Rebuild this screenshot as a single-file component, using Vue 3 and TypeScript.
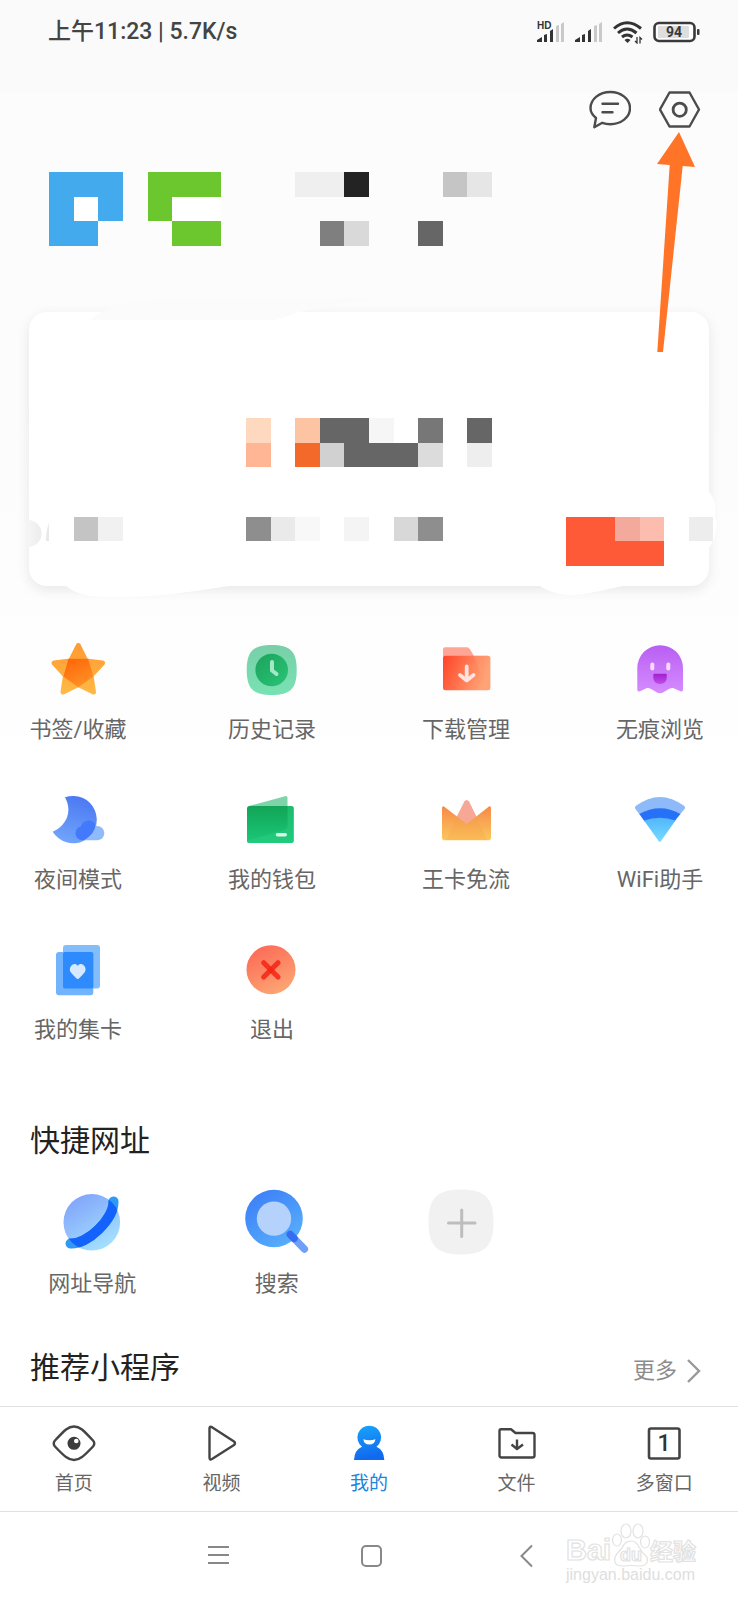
<script setup lang="ts">
interface Entry {
  id: string
  label: string
}

interface Tab extends Entry {
  active?: boolean
}

// x, y, width, height and colour, measured in mosaic cells
type Tile = [number, number, number, number, string]

const shortcuts: Entry[] = [
  { id: 'star', label: '书签/收藏' },
  { id: 'history', label: '历史记录' },
  { id: 'download', label: '下载管理' },
  { id: 'ghost', label: '无痕浏览' },
  { id: 'night', label: '夜间模式' },
  { id: 'wallet', label: '我的钱包' },
  { id: 'crown', label: '王卡免流' },
  { id: 'wifi', label: 'WiFi助手' },
  { id: 'cards', label: '我的集卡' },
  { id: 'exit', label: '退出' },
]

const tabs: Tab[] = [
  { id: 'home', label: '首页' },
  { id: 'video', label: '视频' },
  { id: 'mine', label: '我的', active: true },
  { id: 'files', label: '文件' },
  { id: 'windows', label: '多窗口' },
]

const profileTiles: Tile[] = [
  [2, 0, 3, 1, '#42aaed'],
  [2, 1, 1, 2, '#42aaed'],
  [3, 1, 1, 1, '#ffffff'],
  [4, 1, 1, 1, '#42aaed'],
  [3, 2, 1, 1, '#42aaed'],
  [6, 0, 3, 1, '#6cc72f'],
  [6, 1, 1, 1, '#6cc72f'],
  [7, 1, 2, 1, '#ffffff'],
  [7, 2, 2, 1, '#6cc72f'],
  [12, 0, 2, 1, '#efefef'],
  [14, 0, 1, 1, '#232323'],
  [13, 2, 1, 1, '#7f7f7f'],
  [14, 2, 1, 1, '#d9d9d9'],
  [18, 0, 1, 1, '#c5c5c5'],
  [19, 0, 1, 1, '#e6e6e6'],
  [17, 2, 1, 1, '#666666'],
]

const promoTiles: Tile[] = [
  [10, 0, 1, 1, '#ffd8c0'],
  [12, 0, 1, 1, '#fdc4a3'],
  [13, 0, 2, 1, '#666666'],
  [15, 0, 1, 1, '#f6f6f6'],
  [17, 0, 1, 1, '#777777'],
  [19, 0, 1, 1, '#666666'],
  [10, 1, 1, 1, '#ffb694'],
  [12, 1, 1, 1, '#f2692a'],
  [13, 1, 1, 1, '#d1d1d1'],
  [14, 1, 3, 1, '#666666'],
  [17, 1, 1, 1, '#dcdcdc'],
  [19, 1, 1, 1, '#eeeeee'],
  [3, 4, 1, 1, '#c4c4c4'],
  [4, 4, 1, 1, '#f1f1f1'],
  [10, 4, 1, 1, '#8e8e8e'],
  [11, 4, 1, 1, '#eaeaea'],
  [12, 4, 1, 1, '#f8f8f8'],
  [14, 4, 1, 1, '#f4f4f4'],
  [16, 4, 1, 1, '#d8d8d8'],
  [17, 4, 1, 1, '#8e8e8e'],
  [23, 4, 2, 1, '#ff5a38'],
  [25, 4, 1, 1, '#f3a99b'],
  [26, 4, 1, 1, '#fdbdae'],
  [23, 5, 4, 1, '#ff5a38'],
  [28, 4, 1, 1, '#ededed'],
]
</script>

<template>
  <div class="screen">
    <div class="status">
      <span class="clock">上午11:23 | 5.7K/s</span>
      <div class="indicators">
        <svg width="29" height="24" viewBox="-1 0 29 24">
          <text x="0" y="9" class="hd">HD</text>
          <path d="M0 22v-2l5-3v5z" fill="#333" />
          <path d="M7 22v-7l3-1v8zM13 22v-11l3-2v13z" fill="#333" />
          <path d="M19 22V6l3-1v17zM24 22V4l3-2v20z" fill="#c9c9c9" />
        </svg>
        <svg width="28" height="24" viewBox="0 0 28 24">
          <path d="M0 22v-2l5-3v5zM7 22v-7l3-1v8zM13 22v-11l3-2v13z" fill="#333" />
          <path d="M19 22V6l3-1v17zM24 22V4l3-2v20z" fill="#c9c9c9" />
        </svg>
        <svg width="30" height="24" viewBox="0 0 30 24" fill="none" stroke="#333" stroke-width="3">
          <path d="M1 8.500Q14 -3 28 8.500M5 13Q14 5 23.500 13M9 17Q14 13 19.500 17" />
          <path d="M14.500 23l-3-3q3-2.500 6 0z" fill="#333" stroke="none" />
          <path d="M24 17v6l-2-2M27 23.500v-6l2 2" stroke-width="1.300" />
        </svg>
        <svg width="47" height="24" viewBox="0 0 47 24">
          <rect x="1.500" y="3" width="40" height="18" rx="4.500" fill="#fff" stroke="#3a3a3a" stroke-width="2.600" />
          <rect x="5" y="6" width="31" height="12" rx="1" fill="#dedede" />
          <rect x="44" y="9" width="2.500" height="6" rx="1" fill="#3a3a3a" />
          <text x="21" y="17" text-anchor="middle" class="charge">94</text>
        </svg>
      </div>
    </div>

    <header class="actions">
      <button type="button" aria-label="消息">
        <svg width="42" height="40" viewBox="0 0 42 40" fill="none" stroke="#4c4c4c" stroke-width="2.400" stroke-linecap="round">
          <path d="M7 29C3.500 26 1.500 23 1.500 19.200C1.500 10 10.500 3 21.300 3S41 10 41 19.200S32 35.200 21.300 35.200Q17 35.200 13.300 33.800L5.300 38.200Z" stroke-linejoin="round" />
          <path d="M13.500 14.800h15.500M13.500 23.300h10" />
        </svg>
      </button>
      <button type="button" aria-label="设置">
        <svg width="42" height="40" viewBox="0 0 42 40" fill="none" stroke="#4c4c4c" stroke-width="2.400" stroke-linejoin="round">
          <path d="M10.500 3.500h20l9.500 17l-9.500 17H10.500L1 20.500z" />
          <circle cx="20.700" cy="20.700" r="6.600" stroke-width="2.800" />
        </svg>
      </button>
      <svg class="pointer" width="42" height="222" viewBox="0 0 42 222">
        <path d="M24 1L2 33l12.700 1L2.300 221H8L27.700 35L40 36z" fill="#ff7427" />
      </svg>
    </header>

    <svg class="profile" viewBox="0 0 30 3" shape-rendering="crispEdges">
      <rect v-for="([x, y, w, h, color], i) in profileTiles" :key="i" :x="x" :y="y" :width="w" :height="h" :fill="color" />
    </svg>

    <section class="promo">
      <div class="card"></div>
      <svg class="promo-art" viewBox="0 0 738 320">
        <defs>
          <linearGradient id="notch" x1="0" x2="1">
            <stop offset="0" stop-color="#f5f5f5" />
            <stop offset="1" stop-color="#ececec" />
          </linearGradient>
        </defs>
        <path d="M91 30C105 16 130 8 190 8H390C350 12 315 17 292 24Q282 30 270 30Z" fill="#fbfbfb" />
        <path d="M64 294C78 309 104 308 150 306C192 303 220 296 250 294V285H64Z" fill="#fff" />
        <path d="M537 294C552 305 568 307 590 303L632 294V284H537Z" fill="#fff" />
        <path d="M705 198Q718 208 715 226Q721 246 705 262Z" fill="#fff" />
        <path d="M28 230A13 13 0 0 1 28 257Z" fill="url(#notch)" />
        <path d="M49 233V251H46Q46 240 49 233Z" fill="#e8e8e8" />
        <g transform="translate(0 128.200) scale(24.600)" shape-rendering="crispEdges">
          <rect v-for="([x, y, w, h, color], i) in promoTiles" :key="i" :x="x" :y="y" :width="w" :height="h" :fill="color" />
        </g>
      </svg>
    </section>

    <section class="shortcuts">
      <button v-for="item in shortcuts" :key="item.id" type="button" class="entry">
        <svg v-if="item.id === 'star'" width="60" height="60" viewBox="0 0 60 60">
          <defs>
            <linearGradient id="starA" x1="0" y1="0" x2="0" y2="1"><stop offset="0" stop-color="#ff9b33" /><stop offset="1" stop-color="#ffb845" /></linearGradient>
            <linearGradient id="starB" x1="0" y1="0" x2="0.500" y2="1"><stop offset="0" stop-color="#ff6208" /><stop offset="1" stop-color="#ff9024" /></linearGradient>
          </defs>
          <path d="M30.300 5.500L38 21L54.500 23L43 35.500L45.500 52L30.300 44.500L15 52L17.500 35.500L6 23L22.500 21Z" fill="url(#starA)" stroke="url(#starA)" stroke-width="5" stroke-linejoin="round" />
          <path d="M20.500 18.700H40.200L45.300 36.500L30.300 47.300L15.300 36.500Z" fill="url(#starB)" />
        </svg>
        <svg v-else-if="item.id === 'history'" width="60" height="60" viewBox="0 0 60 60">
          <defs>
            <linearGradient id="histA" x1="0" y1="0" x2="0" y2="1"><stop offset="0" stop-color="#79cfa7" /><stop offset="1" stop-color="#78e2b3" /></linearGradient>
            <linearGradient id="histB" x1="0" y1="0" x2="1" y2="1"><stop offset="0" stop-color="#1aa35b" /><stop offset="1" stop-color="#2bc476" /></linearGradient>
          </defs>
          <path d="M29.700 5C48 5 54.700 11 54.700 30S48 55 29.700 55S4.700 49 4.700 30S11.500 5 29.700 5Z" fill="url(#histA)" />
          <circle cx="29.700" cy="30" r="16.300" fill="url(#histB)" />
          <path d="M30 22v8.500l4.500 3.500" fill="none" stroke="#a5e8c6" stroke-width="4" stroke-linecap="round" stroke-linejoin="round" />
        </svg>
        <svg v-else-if="item.id === 'download'" width="60" height="60" viewBox="0 0 60 60">
          <defs>
            <linearGradient id="foldA" x1="0" x2="1" y2="0.300"><stop offset="0" stop-color="#ff4427" /><stop offset="1" stop-color="#ffa274" /></linearGradient>
          </defs>
          <path d="M9 7.300H31Q33 7.300 34.500 10L48 34V45H7V9.300Q7 7.300 9 7.300Z" fill="#ffa596" />
          <rect x="7" y="15.700" width="47.300" height="34.500" rx="2.500" fill="url(#foldA)" />
          <path d="M37.500 15.700H52Q54.300 15.700 54.300 18V48Q54.300 50.200 52 50.200Z" fill="#ffa57c" opacity="0.300" />
          <path d="M30.700 26.500V40M24 35l6.700 5.500L37.500 35" fill="none" stroke="#ffe3dc" stroke-width="3.800" stroke-linecap="round" stroke-linejoin="round" />
        </svg>
        <svg v-else-if="item.id === 'ghost'" width="60" height="60" viewBox="0 0 60 60">
          <defs>
            <linearGradient id="ghostA" x1="0" y1="0" x2="0" y2="1"><stop offset="0" stop-color="#b85ff2" /><stop offset="1" stop-color="#d68cff" /></linearGradient>
            <linearGradient id="ghostB" x1="0" y1="0" x2="0" y2="1"><stop offset="0" stop-color="#a31fd0" /><stop offset="1" stop-color="#c04de8" /></linearGradient>
          </defs>
          <path d="M7.300 28A22.800 22.800 0 0 1 53 28V49.500Q53 52 50.500 51.200L43 48Q40.500 47.500 38 49.500L33 52.500Q30 54 27 52.500L22 49.500Q19.500 47.500 17 48L10 51.200Q7.300 52 7.300 49.500Z" fill="url(#ghostA)" />
          <path d="M22.300 24.500v4M38.300 24.500v4" stroke="#ffdbff" stroke-width="4" stroke-linecap="round" />
          <path d="M23.300 35Q23.300 33.700 24.600 33.700H35.500Q36.800 33.700 36.800 35V37Q36.800 44 30 44T23.300 37Z" fill="url(#ghostB)" />
        </svg>
        <svg v-else-if="item.id === 'night'" width="60" height="60" viewBox="0 0 60 60">
          <defs>
            <linearGradient id="moonA" x1="0.600" y1="0" x2="0.300" y2="1"><stop offset="0" stop-color="#4b78f2" /><stop offset="1" stop-color="#71a6fb" /></linearGradient>
            <clipPath id="moonClip"><circle cx="24.600" cy="29.600" r="23.700" /></clipPath>
          </defs>
          <path d="M17 7.300A23.700 23.700 0 1 1 4.700 41.700C18 36 25 22 17 7.300Z" fill="url(#moonA)" />
          <g fill="#90bbfb"><circle cx="40.700" cy="38" r="8" /><rect x="27.300" y="36" width="29" height="14.300" rx="7.150" /></g>
          <g clip-path="url(#moonClip)" fill="#4379fb"><circle cx="40.700" cy="38" r="8" /><rect x="27.300" y="36" width="29" height="14.300" rx="7.150" /></g>
        </svg>
        <svg v-else-if="item.id === 'wallet'" width="60" height="60" viewBox="0 0 60 60">
          <defs>
            <linearGradient id="walA" x1="0" y1="0" x2="0" y2="1"><stop offset="0" stop-color="#12a456" /><stop offset="1" stop-color="#1bc878" /></linearGradient>
          </defs>
          <path d="M7 16L43 6.200Q45.500 5.500 45.500 8V18H7Z" fill="#7dd4a8" />
          <rect x="5" y="16" width="46.700" height="37" rx="2.500" fill="url(#walA)" />
          <path d="M45.500 16H49.200Q51.700 16 51.700 18.500V50.500Q51.700 53 49.200 53H7Q5 53 5 50.500L42 40Q45.500 39 45.500 36Z" fill="#28cd80" opacity="0.550" />
          <path d="M35.500 44.700h7.700" stroke="#d7f7e7" stroke-width="3.600" stroke-linecap="round" />
        </svg>
        <svg v-else-if="item.id === 'crown'" width="60" height="60" viewBox="0 0 60 60">
          <defs>
            <linearGradient id="crownA" x1="0" y1="0" x2="0" y2="1"><stop offset="0" stop-color="#f68a48" /><stop offset="1" stop-color="#fcc75f" /></linearGradient>
          </defs>
          <path d="M28.300 11.500Q30.700 8.500 33.100 11.500L50 46H11Z" fill="#f6a796" />
          <path d="M6 18.500Q6 15 9 17.200L30.700 34L52 17.200Q55 15 55 18.500V47.500Q55 50.200 52.500 50.200H8.500Q6 50.200 6 47.500Z" fill="url(#crownA)" />
          <path d="M21.500 27L30.700 34L40 27L51 50H10Z" fill="#f0a040" opacity="0.280" />
        </svg>
        <svg v-else-if="item.id === 'wifi'" width="60" height="60" viewBox="0 0 60 60">
          <defs>
            <linearGradient id="wifiA" x1="0" y1="0" x2="0" y2="1"><stop offset="0" stop-color="#52b6fc" /><stop offset="1" stop-color="#76dcff" /></linearGradient>
          </defs>
          <path d="M5.500 19Q4 17.300 6 15.800Q30 -2 54 15.800Q56 17.300 54.500 19L50 24.500H9.500Z" fill="#8ebafa" />
          <path d="M9.300 24Q30 12.500 50.400 24L44 32H15Z" fill="#2771f8" />
          <path d="M14 30.500Q30 25 45.500 30.500L31 51Q29.800 52.700 28.600 51Z" fill="url(#wifiA)" />
        </svg>
        <svg v-else-if="item.id === 'cards'" width="60" height="60" viewBox="0 0 60 60">
          <rect x="15" y="5" width="37" height="43.500" rx="3" fill="#83bdfc" />
          <rect x="8" y="12" width="37.300" height="43.300" rx="3" fill="#71b3fc" />
          <rect x="15" y="12" width="30.300" height="36.500" rx="2" fill="#2e8bfe" />
          <path d="M29.700 39Q28.500 39 22.700 32.200C19.500 27.500 26 21 29.700 25.800C33.500 21 40 27.500 36.700 32.200Q31 39 29.700 39Z" fill="#d6e9ff" />
        </svg>
        <svg v-else width="60" height="60" viewBox="0 0 60 60">
          <defs>
            <linearGradient id="exitA" x1="0.200" y1="0" x2="0.700" y2="1"><stop offset="0" stop-color="#fc6856" /><stop offset="1" stop-color="#fca774" /></linearGradient>
          </defs>
          <circle cx="29" cy="29.700" r="24.500" fill="url(#exitA)" />
          <path d="M21.700 22.700L36 37" stroke="#f42415" stroke-width="5" stroke-linecap="round" opacity="0.850" />
          <path d="M36 22.700L21.700 37" stroke="#f42415" stroke-width="5" stroke-linecap="round" opacity="0.850" />
        </svg>
        <span>{{ item.label }}</span>
      </button>
    </section>

    <h2 class="title sites-title">快捷网址</h2>
    <section class="sites">
      <a href="#nav" class="site">
        <svg width="66" height="66" viewBox="0 0 66 66">
          <defs>
            <linearGradient id="globeA" x1="0.200" y1="0.100" x2="0.750" y2="1"><stop offset="0" stop-color="#83a7fb" /><stop offset="1" stop-color="#a5e3ff" /></linearGradient>
            <clipPath id="globeClip"><circle cx="32.800" cy="33.300" r="28.300" /></clipPath>
          </defs>
          <circle cx="32.800" cy="33.300" r="28.300" fill="url(#globeA)" />
          <path d="M11.500 54.500C28 56 55 30 54.500 12.500" fill="none" stroke="#2e9af6" stroke-width="10" stroke-linecap="round" />
          <path d="M11.500 54.500C28 56 55 30 54.500 12.500" fill="none" stroke="#1262fb" stroke-width="10" stroke-linecap="round" clip-path="url(#globeClip)" />
        </svg>
        <span>网址导航</span>
      </a>
      <a href="#search" class="site">
        <svg width="66" height="66" viewBox="0 0 66 66">
          <defs>
            <linearGradient id="findA" x1="0.100" y1="0" x2="0.800" y2="1"><stop offset="0" stop-color="#3b7cf8" /><stop offset="1" stop-color="#58b1fb" /></linearGradient>
          </defs>
          <circle cx="30" cy="29.500" r="28.800" fill="url(#findA)" />
          <circle cx="30" cy="29.600" r="17.200" fill="#b5d2fc" />
          <path d="M46.300 45.500L60.300 60" stroke="#6f9ffa" stroke-width="7.500" stroke-linecap="round" />
          <path d="M46.300 45.500L50 49.300" stroke="#346cf2" stroke-width="7.500" stroke-linecap="round" />
        </svg>
        <span>搜索</span>
      </a>
      <button type="button" class="site" aria-label="添加网址">
        <svg width="66" height="66" viewBox="0 0 66 66">
          <path d="M33 0.500C57 0.500 65.500 9 65.500 33S57 65.500 33 65.500S0.500 57 0.500 33S9 0.500 33 0.500Z" fill="#f1f1f1" />
          <path d="M20.500 34h26.500M33.700 21v26.500" stroke="#bdbdbd" stroke-width="3" stroke-linecap="round" />
        </svg>
      </button>
    </section>

    <div class="mini">
      <h2 class="title">推荐小程序</h2>
      <a href="#more" class="more">
        更多
        <svg width="14" height="24" viewBox="0 0 14 24" fill="none" stroke="#999" stroke-width="2.400">
          <path d="M1 1l11 11L1 23" />
        </svg>
      </a>
    </div>

    <nav class="tabs">
      <a v-for="tab in tabs" :key="tab.id" :href="'#' + tab.id" class="tab" :class="{ active: tab.active }">
        <svg v-if="tab.id === 'home'" width="44" height="40" viewBox="0 0 44 40">
          <path d="M3 17.500Q10.500 9.500 14 6.500Q22 0.500 30 6.500Q33.500 9.500 41 17.500Q43.500 20.300 41 23.500Q33.500 31.500 30 34Q22 40 14 34Q10.500 31.500 3 23.500Q0.500 20.300 3 17.500Z" fill="none" stroke="#444" stroke-width="2.400" />
          <circle cx="22" cy="20.300" r="6.500" fill="#3c3c3c" />
          <circle cx="24.300" cy="18" r="2.300" fill="#fff" />
        </svg>
        <svg v-else-if="tab.id === 'video'" width="44" height="40" viewBox="0 0 44 40">
          <path d="M10.500 5.500Q10.500 3 13 4.200L35 18.500Q37 20.300 35 22L13 36Q10.500 37.500 10.500 34.500Z" fill="none" stroke="#444" stroke-width="2.400" stroke-linejoin="round" />
        </svg>
        <svg v-else-if="tab.id === 'mine'" width="44" height="40" viewBox="0 0 44 40">
          <defs>
            <linearGradient id="mineA" x1="0" y1="0" x2="0.200" y2="1"><stop offset="0" stop-color="#18a5fc" /><stop offset="1" stop-color="#1169ee" /></linearGradient>
          </defs>
          <path d="M22.300 2.700A11.700 11.700 0 0 1 29.500 23.700Q37 27 37.300 37H7Q7.300 27 15 23.700A11.700 11.700 0 0 1 22.300 2.700Z" fill="url(#mineA)" />
          <path d="M16.300 16.300Q22.300 18.300 28.500 16.300Q27.500 21.500 22.300 21.500T16.300 16.300Z" fill="#fff" />
        </svg>
        <svg v-else-if="tab.id === 'files'" width="44" height="40" viewBox="0 0 44 40" fill="none" stroke="#444" stroke-width="2.400" stroke-linejoin="round">
          <path d="M6 6.300H16L20.500 10H37.500Q39.500 10 39.500 12V32.500Q39.500 34.500 37.500 34.500H6.500Q4.500 34.500 4.500 32.500V8Q4.500 6.300 6 6.300Z" />
          <path d="M22 16.500V26M16.500 21.500L22 26L28 21.500" />
        </svg>
        <svg v-else width="44" height="40" viewBox="0 0 44 40">
          <rect x="7" y="5.500" width="30.500" height="30" rx="2" fill="none" stroke="#444" stroke-width="2.600" />
          <text x="22" y="28" text-anchor="middle" class="count">1</text>
        </svg>
        <span>{{ tab.label }}</span>
      </a>
    </nav>

    <div class="system">
      <button type="button" aria-label="菜单">
        <svg width="24" height="24" viewBox="0 0 24 24" stroke="#888" stroke-width="2"><path d="M2 3h21M2 11h21M2 19h21" /></svg>
      </button>
      <button type="button" aria-label="主屏幕">
        <svg width="24" height="24" viewBox="0 0 24 24"><rect x="2" y="2" width="19" height="20" rx="4" fill="none" stroke="#888" stroke-width="2" /></svg>
      </button>
      <button type="button" aria-label="返回">
        <svg width="24" height="24" viewBox="0 0 24 24" fill="none" stroke="#888" stroke-width="2"><path d="M18 1.500L7.500 12L18 22.500" /></svg>
      </button>
      <svg class="brand" width="140" height="70" viewBox="0 0 140 70">
        <g fill="#fff" stroke="#e2e2e2" stroke-width="1.200">
          <text x="2" y="46" class="brand-big">Bai</text>
          <ellipse cx="53" cy="26" rx="4.500" ry="6" />
          <ellipse cx="62" cy="17" rx="5" ry="7" />
          <ellipse cx="74" cy="17" rx="5" ry="7" />
          <ellipse cx="81" cy="28" rx="4.500" ry="6" />
          <path d="M67 27Q72 27 75 33T83 43Q85 52 76 52Q67 51 58 52Q49 52 51 43Q53 39 58 34Q61 27 67 27Z" />
          <text x="56" y="47" class="brand-du">du</text>
          <text x="86" y="46" class="brand-cn">经验</text>
        </g>
        <text x="2" y="66" class="brand-url">jingyan.baidu.com</text>
      </svg>
    </div>
  </div>
</template>

<style>
body {
  margin: 0;
  background: #fff;
}
</style>

<style scoped>
.screen {
  font-family: Roboto, 'Noto Sans CJK SC', sans-serif;
  color: #666;
  background: linear-gradient(#fafafa 0, #fafafa 91px, #fcfcfc 92px, #fcfcfc 400px, #fefefe 736px, #fff 737px);
  overflow: hidden;
}

button {
  padding: 0;
  border: 0;
  background: none;
  font: inherit;
  color: inherit;
}

a {
  color: inherit;
  text-decoration: none;
}

svg {
  display: block;
}

.status {
  display: flex;
  align-items: center;
  justify-content: space-between;
  height: 64px;
  padding: 0 38px 0 48px;
}

.clock {
  font-size: 23px;
  font-weight: 500;
  line-height: 32px;
  color: #444;
}

.indicators {
  display: flex;
  gap: 10px;
}

.hd {
  font: bold 10px 'Liberation Sans', sans-serif;
  fill: #333;
}

.charge {
  font: bold 14px Roboto, sans-serif;
  fill: #3a3a3a;
}

.actions {
  position: relative;
  display: flex;
  align-items: center;
  justify-content: flex-end;
  gap: 28px;
  height: 90px;
  padding-right: 37px;
}

.pointer {
  position: absolute;
  z-index: 2;
  top: 67px;
  right: 41px;
}

.profile {
  width: 100%;
  margin-top: 18px;
}

.promo {
  display: grid;
  margin-top: 44px;
}

.card {
  grid-area: 1 / 1;
  margin: 22px 29px 24px;
  border-radius: 18px;
  background: #fff;
  box-shadow: 0 4px 14px rgba(0, 0, 0, 0.09);
}

.promo-art {
  grid-area: 1 / 1;
  width: 100%;
  position: relative;
}

.shortcuts {
  display: grid;
  grid-template-columns: repeat(4, 98px);
  justify-content: space-between;
  row-gap: 45px;
  padding: 30px 29px 0;
}

.entry,
.site {
  display: flex;
  flex-direction: column;
  align-items: center;
  gap: 14px;
  font-size: 22px;
  line-height: 30px;
  white-space: nowrap;
}

.entry {
  gap: 15px;
}

.title {
  margin: 0;
  font-size: 30px;
  font-weight: 400;
  line-height: 40px;
  color: #222;
}

.sites-title {
  margin: 76px 30px 28px;
}

.sites {
  display: grid;
  grid-template-columns: repeat(4, 1fr);
  align-items: start;
}

.mini {
  display: flex;
  align-items: baseline;
  justify-content: space-between;
  padding: 49px 37px 18px 30px;
}

.more {
  display: flex;
  align-items: center;
  gap: 10px;
  font-size: 22px;
  line-height: 30px;
  color: #8c8c8c;
}

.tabs {
  display: grid;
  grid-template-columns: repeat(5, 1fr);
  padding: 16px 0 14px;
  border-top: 1px solid #e0e0e0;
  border-bottom: 1px solid #e0e0e0;
}

.tab {
  display: flex;
  flex-direction: column;
  align-items: center;
  gap: 8px;
  font-size: 19px;
  line-height: 26px;
}

.active {
  color: #1b86dc;
}

.count {
  font: 500 23px Roboto, sans-serif;
  fill: #333;
}

.system {
  position: relative;
  display: flex;
  align-items: center;
  justify-content: center;
  gap: 130px;
  height: 88px;
  padding-left: 6px;
}

.brand {
  position: absolute;
  right: 34px;
  top: 2px;
}

.brand-big {
  font: bold 29px 'Liberation Sans', sans-serif;
}

.brand-du {
  font: bold 18px 'Liberation Sans', sans-serif;
}

.brand-cn {
  font: bold 23px 'Noto Sans CJK SC', sans-serif;
}

.brand-url {
  font: 16px 'Liberation Sans', sans-serif;
  fill: #dedede;
}
</style>
